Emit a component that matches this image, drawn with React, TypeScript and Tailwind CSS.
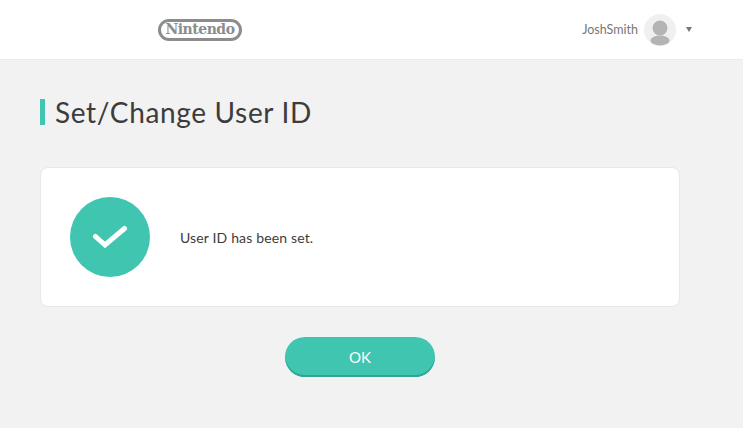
export default function App() {
  return (
    <div className="h-[428px] w-[743px] overflow-hidden bg-[#f2f2f2] font-['Lato',sans-serif] text-[#3c3c3c]">
      <header className="flex h-[60px] items-center justify-between border-b border-[#ebebeb] bg-white pl-[158px] pr-[50px]">
        <div className="flex h-[22px] w-[84px] items-center justify-center rounded-full border-[3px] border-[#8c8c8c] pb-px font-['DejaVu_Serif',serif] text-[14px] font-bold leading-none tracking-[-0.5px] text-[#8c8c8c]">
          Nintendo
        </div>
        <div className="flex items-center pt-px">
          <span className="text-[12.5px] text-[#777]">JoshSmith</span>
          <div className="ml-[6px] flex h-8 w-8 flex-col items-center overflow-hidden rounded-full bg-[#f0f0f0]">
            <svg width="32" height="32" viewBox="0 0 32 32">
              <circle cx="16" cy="14" r="7.5" fill="#b4b4b4" />
              <ellipse cx="16" cy="26.5" rx="9.5" ry="5" fill="#b4b4b4" />
            </svg>
          </div>
          <svg className="ml-[10px] mr-px -translate-y-px" width="6" height="6" viewBox="0 0 6 6">
            <path d="M0 1h6L3 6z" fill="#777" />
          </svg>
        </div>
      </header>
      <main className="w-[720px] pl-10 pr-10">
        <div className="mt-[39px] flex h-[26px] items-center border-l-[5px] border-[#3fc5b0] pl-[10px]">
          <h1 className="text-[28px] leading-none tracking-[0.65px] text-[#3c3c3c]">Set/Change User ID</h1>
        </div>
        <section className="mt-[42px] flex h-[140px] items-center rounded-lg border border-[#e8e8e8] bg-white pl-[29px]">
          <div className="flex h-20 w-20 items-center justify-center rounded-full bg-[#3fc5b0]">
            <svg width="36" height="26" viewBox="0 0 36 26" fill="none">
              <path d="M3.5 12.5 13 21 32.5 4.5" stroke="#fff" strokeWidth="5" strokeLinecap="round" strokeLinejoin="miter" />
            </svg>
          </div>
          <p className="ml-[30px] text-[14px] tracking-[0.15px] text-[#3c3c3c]">User ID has been set.</p>
        </section>
        <div className="mt-[30px] flex justify-center">
          <button className="h-10 w-[150px] rounded-full bg-[#3fc5b0] text-[15px] text-white shadow-[inset_0_-2px_0_#2fa592]">
            OK
          </button>
        </div>
      </main>
    </div>
  );
}
